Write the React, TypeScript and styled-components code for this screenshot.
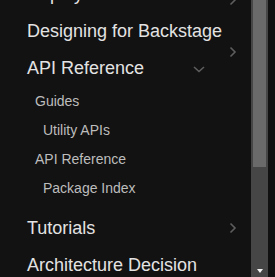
import styled, { createGlobalStyle } from 'styled-components'

const GlobalStyle = createGlobalStyle`
  html, body {
    margin: 0;
    padding: 0;
    background-color: #121212;
  }
  body {
    font-family: "Liberation Sans", Arial, sans-serif;
  }
`

const Frame = styled.div`
  display: flex;
  width: 275px;
  height: 277px;
  overflow: hidden;
  background-color: #121212;
`
const Sidebar = styled.nav`
  width: 251px;
  height: 100%;
  overflow: hidden;
`
const Menu = styled.ul`
  list-style: none;
  margin: -24.5px 0 0 0;
  padding: 0;
`
const MainRow = styled.li`
  display: flex;
  align-items: flex-start;
  justify-content: space-between;
  box-sizing: border-box;
  min-height: 37px;
  padding: 8px 14px 8px 27px;
`
const MainLink = styled.span`
  font-size: 18px;
  line-height: 21px;
  color: #e3e3e3;
`
const Chevron = styled.svg<{ $drop?: number }>`
  width: 8px;
  height: 12px;
  flex-shrink: 0;
  align-self: center;
  transform: translateY(${(p) => p.$drop ?? 0}px);
`
const Caret = styled.svg`
  width: 12px;
  height: 7px;
  margin-right: 32px;
  margin-top: 2px;
  flex-shrink: 0;
  align-self: center;
`
const SubList = styled.ul`
  list-style: none;
  margin: 0 0 7px 0;
  padding: 0;
`
const SubRow = styled.li<{ $depth: number }>`
  height: 29px;
  display: flex;
  align-items: center;
  padding-left: ${(p) => (p.$depth === 2 ? 43 : 35)}px;
`
const SubLink = styled.span`
  font-size: 14px;
  line-height: 17px;
  color: #bdbdbd;
  white-space: nowrap;
`
const ScrollTrack = styled.div`
  width: 17px;
  height: 100%;
  background-color: #464646;
  display: flex;
  flex-direction: column;
  justify-content: space-between;
  align-items: center;
`
const ScrollThumb = styled.div`
  width: 13px;
  height: 167px;
  background-color: #6a6a6a;
`
const ScrollArrow = styled.div`
  width: 0;
  height: 0;
  margin-bottom: 4px;
  border-left: 3.5px solid transparent;
  border-right: 3.5px solid transparent;
  border-top: 4px solid #f2f2f2;
`
const Gutter = styled.div`
  flex: 1;
  background-color: #111111;
`

const Right = ({ drop }: { drop?: number }) => (
  <Chevron viewBox="0 0 8 12" $drop={drop}>
    <polyline points="1.5,1.5 6,6 1.5,10.5" fill="none" stroke="#5e5e5e" strokeWidth="1.6" />
  </Chevron>
)

const Down = () => (
  <Caret viewBox="0 0 12 7">
    <polyline points="1,1 6,5.5 11,1" fill="none" stroke="#5e5e5e" strokeWidth="1.6" />
  </Caret>
)

const subItems = [
  { label: 'Guides', depth: 1 },
  { label: 'Utility APIs', depth: 2 },
  { label: 'API Reference', depth: 1 },
  { label: 'Package Index', depth: 2 },
]

export default function App() {
  return (
    <>
      <GlobalStyle />
      <Frame>
        <Sidebar>
          <Menu>
            <MainRow>
              <MainLink>Deployment</MainLink>
              <Right drop={6} />
            </MainRow>
            <MainRow>
              <MainLink>Designing for Backstage</MainLink>
              <Right drop={21} />
            </MainRow>
            <MainRow>
              <MainLink>API Reference</MainLink>
              <Down />
            </MainRow>
            <SubList>
              {subItems.map((item) => (
                <SubRow key={item.label + item.depth} $depth={item.depth}>
                  <SubLink>{item.label}</SubLink>
                </SubRow>
              ))}
            </SubList>
            <MainRow>
              <MainLink>Tutorials</MainLink>
              <Right />
            </MainRow>
            <MainRow>
              <MainLink>Architecture Decision Records</MainLink>
            </MainRow>
          </Menu>
        </Sidebar>
        <ScrollTrack>
          <ScrollThumb />
          <ScrollArrow />
        </ScrollTrack>
        <Gutter />
      </Frame>
    </>
  )
}
